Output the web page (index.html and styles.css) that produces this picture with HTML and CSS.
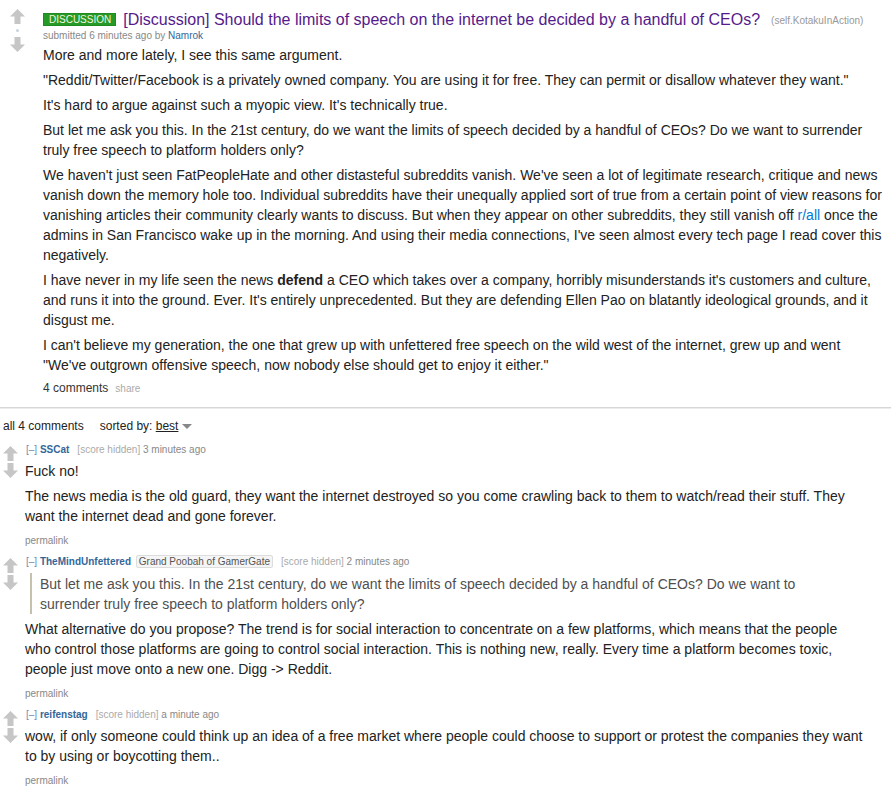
FILE: index.html
```html
<!DOCTYPE html>
<html>
<head>
<meta charset="utf-8">
<link rel="stylesheet" href="styles.css">
</head>
<body>
<div class="link">
  <div class="midcol">
    <svg class="arrow" width="15" height="15" viewBox="0 0 15 15"><polygon points="7.5,0 15,7.5 10.5,7.5 10.5,15 4.5,15 4.5,7.5 0,7.5" fill="#c6c6c6"/></svg>
    <span class="dot"></span>
    <svg class="arrow" width="15" height="15" viewBox="0 0 15 15"><polygon points="4.5,0 10.5,0 10.5,7.5 15,7.5 7.5,15 0,7.5 4.5,7.5" fill="#c6c6c6"/></svg>
  </div>
  <div class="entry">
    <p class="title"><span class="linkflair">DISCUSSION</span><a class="titlelink">[Discussion] Should the limits of speech on the internet be decided by a handful of CEOs?</a><span class="domain">(self.KotakuInAction)</span></p>
    <p class="tagline">submitted 6 minutes ago by <a class="author-link">Namrok</a></p>
    <div class="md post-md">
      <p>More and more lately, I see this same argument.</p>
      <p>"Reddit/Twitter/Facebook is a privately owned company. You are using it for free. They can permit or disallow whatever they want."</p>
      <p>It's hard to argue against such a myopic view. It's technically true.</p>
      <p>But let me ask you this. In the 21st century, do we want the limits of speech decided by a handful of CEOs? Do we want to surrender truly free speech to platform holders only?</p>
      <p>We haven't just seen FatPeopleHate and other distasteful subreddits vanish. We've seen a lot of legitimate research, critique and news vanish down the memory hole too. Individual subreddits have their unequally applied sort of true from a certain point of view reasons for vanishing articles their community clearly wants to discuss. But when they appear on other subreddits, they still vanish off <a class="sublink">r/all</a> once the admins in San Francisco wake up in the morning. And using their media connections, I've seen almost every tech page I read cover this negatively.</p>
      <p>I have never in my life seen the news <strong>defend</strong> a CEO which takes over a company, horribly misunderstands it's customers and culture, and runs it into the ground. Ever. It's entirely unprecedented. But they are defending Ellen Pao on blatantly ideological grounds, and it disgust me.</p>
      <p>I can't believe my generation, the one that grew up with unfettered free speech on the wild west of the internet, grew up and went "We've outgrown offensive speech, now nobody else should get to enjoy it either."</p>
    </div>
    <ul class="buttons"><li class="comments-btn">4 comments</li><li class="share-btn">share</li></ul>
  </div>
</div>

<div class="divider"></div>

<div class="commentarea">
  <div class="menuarea">
    <span class="allcomments">all 4 comments</span>
    <span class="sorted">sorted by: <span class="sortsel">best</span><span class="sortarrow"></span></span>
  </div>

  <div class="comment">
    <div class="cmidcol">
      <svg class="arrow" width="15" height="15" viewBox="0 0 15 15"><polygon points="7.5,0 15,7.5 10.5,7.5 10.5,15 4.5,15 4.5,7.5 0,7.5" fill="#c6c6c6"/></svg>
      <svg class="arrow down" width="15" height="15" viewBox="0 0 15 15"><polygon points="4.5,0 10.5,0 10.5,7.5 15,7.5 7.5,15 0,7.5 4.5,7.5" fill="#c6c6c6"/></svg>
    </div>
    <div class="centry">
      <p class="ctagline"><span class="expand">[–]</span> <span class="author">SSCat</span><span class="score">[score hidden]</span> <span class="time">3 minutes ago</span></p>
      <div class="md cmd">
        <p>Fuck no!</p>
        <p>The news media is the old guard, they want the internet destroyed so you come crawling back to them to watch/read their stuff. They want the internet dead and gone forever.</p>
      </div>
      <p class="permalink">permalink</p>
    </div>
  </div>

  <div class="comment">
    <div class="cmidcol">
      <svg class="arrow" width="15" height="15" viewBox="0 0 15 15"><polygon points="7.5,0 15,7.5 10.5,7.5 10.5,15 4.5,15 4.5,7.5 0,7.5" fill="#c6c6c6"/></svg>
      <svg class="arrow down" width="15" height="15" viewBox="0 0 15 15"><polygon points="4.5,0 10.5,0 10.5,7.5 15,7.5 7.5,15 0,7.5 4.5,7.5" fill="#c6c6c6"/></svg>
    </div>
    <div class="centry">
      <p class="ctagline"><span class="expand">[–]</span> <span class="author">TheMindUnfettered</span> <span class="flair">Grand Poobah of GamerGate</span><span class="score">[score hidden]</span> <span class="time">2 minutes ago</span></p>
      <div class="md cmd">
        <blockquote><p>But let me ask you this. In the 21st century, do we want the limits of speech decided by a handful of CEOs? Do we want to surrender truly free speech to platform holders only?</p></blockquote>
        <p>What alternative do you propose? The trend is for social interaction to concentrate on a few platforms, which means that the people who control those platforms are going to control social interaction. This is nothing new, really. Every time a platform becomes toxic, people just move onto a new one. Digg -&gt; Reddit.</p>
      </div>
      <p class="permalink">permalink</p>
    </div>
  </div>

  <div class="comment">
    <div class="cmidcol">
      <svg class="arrow" width="15" height="15" viewBox="0 0 15 15"><polygon points="7.5,0 15,7.5 10.5,7.5 10.5,15 4.5,15 4.5,7.5 0,7.5" fill="#c6c6c6"/></svg>
      <svg class="arrow down" width="15" height="15" viewBox="0 0 15 15"><polygon points="4.5,0 10.5,0 10.5,7.5 15,7.5 7.5,15 0,7.5 4.5,7.5" fill="#c6c6c6"/></svg>
    </div>
    <div class="centry">
      <p class="ctagline"><span class="expand">[–]</span> <span class="author">reifenstag</span><span class="score">[score hidden]</span> <span class="time">a minute ago</span></p>
      <div class="md cmd">
        <p>wow, if only someone could think up an idea of a free market where people could choose to support or protest the companies they want to by using or boycotting them..</p>
      </div>
      <p class="permalink">permalink</p>
    </div>
  </div>
</div>
</body>
</html>
```

FILE: styles.css
```css
html, body {
  margin: 0;
  padding: 0;
  background: #fff;
}
body {
  font-family: "Liberation Sans", Arial, sans-serif;
  color: #222;
  width: 891px;
  overflow: hidden;
}
p { margin: 0; }
a { text-decoration: none; }

.link {
  display: flex;
}
.midcol {
  flex: none;
  width: 33px;
  padding-left: 10px;
  padding-top: 9px;
  display: flex;
  flex-direction: column;
}
.arrow { display: block; }
.dot {
  display: block;
  width: 3px;
  height: 3px;
  border-radius: 50%;
  background: #c9d3dc;
  margin: 5px 0 5px 6px;
}
.entry {
  flex: 1;
  padding-top: 9px;
  min-width: 0;
}
.title {
  font-size: 16px;
  line-height: 17px;
  white-space: nowrap;
  display: flex;
  align-items: center;
}
.linkflair {
  display: inline-block;
  background: #269a26;
  border: 1px solid #1f8a1f;
  color: #f4f4e0;
  font-size: 10px;
  line-height: 11px;
  padding: 0 4px 0 5px;
  margin-right: 7px;
}
.titlelink {
  color: #551a8b;
}
.domain {
  font-size: 10px;
  color: #999;
  margin-left: 11px;
  padding-top: 3px;
}
.tagline {
  font-size: 10px;
  line-height: 14px;
  color: #888;
}
.author-link { color: #369; }

.md {
  font-size: 14px;
  line-height: 20px;
  max-width: 840px;
  color: #222;
}
.md p + p { margin-top: 5px; }
.post-md { margin-top: 2px; }
.sublink { color: #0079d3; }

.buttons {
  list-style: none;
  margin: 6px 0 0;
  padding: 0;
  display: flex;
  align-items: center;
  height: 14px;
}
.comments-btn {
  font-size: 12px;
  color: #333;
  margin-right: 7px;
}
.share-btn {
  font-size: 10px;
  color: #aaa;
  padding-top: 1px;
}

.divider {
  margin-top: 12px;
  border-top: 1px solid #d6d6d6;
  border-bottom: 1px solid #ececec;
}

.commentarea {
  padding-left: 3px;
}
.menuarea {
  margin-top: 9px;
  margin-bottom: 0;
  font-size: 12px;
  line-height: 16px;
  display: flex;
  align-items: center;
}
.sorted { margin-left: 16px; }
.sortsel {
  text-decoration: underline;
}
.sortarrow {
  display: inline-block;
  width: 0;
  height: 0;
  border-left: 5px solid transparent;
  border-right: 5px solid transparent;
  border-top: 5px solid #888;
  margin-left: 4px;
  vertical-align: 1px;
}

.comment {
  display: flex;
  margin-top: 9px;
}
.cmidcol {
  flex: none;
  width: 22px;
  padding-top: 3px;
  display: flex;
  flex-direction: column;
}
.arrow.down { margin-top: 2px; }
.centry {
  flex: 1;
  min-width: 0;
}
.ctagline {
  font-size: 10px;
  line-height: 14px;
  color: #888;
  padding-left: 1px;
  white-space: nowrap;
}
.expand { color: #6a8bb4; }
.author {
  color: #369;
  font-weight: bold;
}
.flair {
  display: inline-block;
  color: #545454;
  background: #f5f5f5;
  border: 1px solid #ddd;
  border-radius: 2px;
  padding: 0 2px;
  line-height: 11px;
  margin-left: 2px;
}
.score {
  color: #aaa;
  margin-left: 8px;
}
.time { color: #888; }

.cmd { margin-top: 4px; }
blockquote {
  margin: 0 0 0 5px;
  padding: 1px 8px 0 8px;
  border-left: 2px solid #c5c1ad;
  color: #4f4f4f;
}
blockquote + p { margin-top: 5px; }
.permalink {
  margin-top: 8px;
  font-size: 10px;
  line-height: 14px;
  color: #888;
}
.comment + .comment { margin-top: 7px; }
```
